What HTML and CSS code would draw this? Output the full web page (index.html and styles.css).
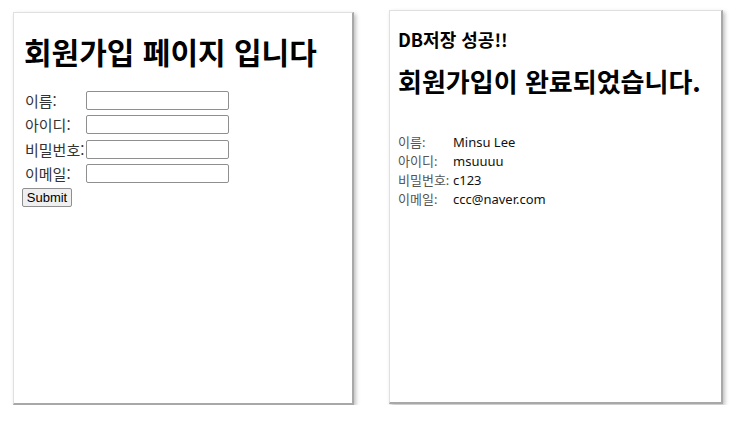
FILE: index.html
```html
<!DOCTYPE html>
<html lang="ko">
<head>
    <meta charset="UTF-8">
    <meta name="viewport" content="width=device-width, initial-scale=1.0">
    <title>회원가입</title>
    <link rel="stylesheet" href="styles.css">
</head>
<body>
    <div class="pages">
        <!-- 회원가입 폼 -->
        <div class="page page-join">
            <h1>회원가입 페이지 입니다</h1>
            <form class="join-form" action="#" method="post">
                <div class="row">
                    <label for="name">이름:</label>
                    <input type="text" id="name" name="name">
                </div>
                <div class="row">
                    <label for="id">아이디:</label>
                    <input type="text" id="id" name="id">
                </div>
                <div class="row">
                    <label for="pw">비밀번호:</label>
                    <input type="password" id="pw" name="pw">
                </div>
                <div class="row">
                    <label for="email">이메일:</label>
                    <input type="text" id="email" name="email">
                </div>
                <button type="submit">Submit</button>
            </form>
        </div>

        <!-- 저장 결과 -->
        <div class="page page-result">
            <h3>DB저장 성공!!</h3>
            <h1>회원가입이 완료되었습니다.</h1>
            <table class="info">
                <tr><th>이름:</th><td>Minsu Lee</td></tr>
                <tr><th>아이디:</th><td>msuuuu</td></tr>
                <tr><th>비밀번호:</th><td>c123</td></tr>
                <tr><th>이메일:</th><td>ccc@naver.com</td></tr>
            </table>
        </div>
    </div>
</body>
</html>
```

FILE: styles.css
```css
/* 기본 */
body {
    margin: 0;
    background-color: #fff;
    font-family: "Noto Sans CJK KR", sans-serif;
    color: #000;
}

.pages {
    display: flex;
    align-items: flex-start;
    gap: 35px;
    padding: 10px 0 0 13px;
}

/* 페이지 카드 */
.page {
    box-sizing: border-box;
    background-color: #fff;
    border: 1px solid #e0e0e0;
    border-right: 2px solid #a8a8a8;
    border-bottom: 2px solid #a8a8a8;
    box-shadow: 2px 2px 4px rgba(0, 0, 0, 0.25);
}

.page-join {
    width: 341px;
    height: 393px;
    margin-top: 2px;
    padding: 0 8px;
}

.page-result {
    width: 334px;
    height: 394px;
    padding: 0 8px;
}

h1 {
    font-size: 30px;
    font-weight: bold;
    line-height: 36px;
    margin: 20px 0 22px 2px;
}

/* 폼 */
.join-form .row {
    display: flex;
    align-items: center;
    height: 19px;
    margin-bottom: 5.3px;
}

.join-form label {
    width: 61px;
    font-size: 15px;
    line-height: 19px;
    color: #333;
    padding-left: 3px;
}

.join-form input {
    box-sizing: border-box;
    width: 143px;
    height: 19px;
    margin: 0;
    border: 1px solid #8f8f8f;
    border-radius: 2px;
    padding: 1px 2px;
}

.join-form button {
    display: block;
    margin-top: 0;
    width: 50px;
    height: 19px;
    padding: 0;
    font-family: "Liberation Sans", Arial, sans-serif;
    font-size: 13px;
    color: #000;
    background-color: #efefef;
    border: 1px solid #8f8f8f;
    border-radius: 2px;
}

/* 결과 */
.page-result h3 {
    font-size: 18px;
    line-height: 24px;
    margin: 16px 0 0;
}

.page-result h1 {
    font-size: 26px;
    line-height: 32px;
    margin: 14px 0 36px;
}

.info {
    border-collapse: collapse;
    font-family: "Noto Sans", "Noto Sans CJK KR", sans-serif;
    font-size: 13px;
    line-height: 19px;
}

.info tr {
    height: 19px;
}

.info th {
    width: 55px;
    padding: 0;
    text-align: left;
    font-weight: normal;
    color: #555;
}

.info td {
    padding: 0;
    color: #111;
}
```
